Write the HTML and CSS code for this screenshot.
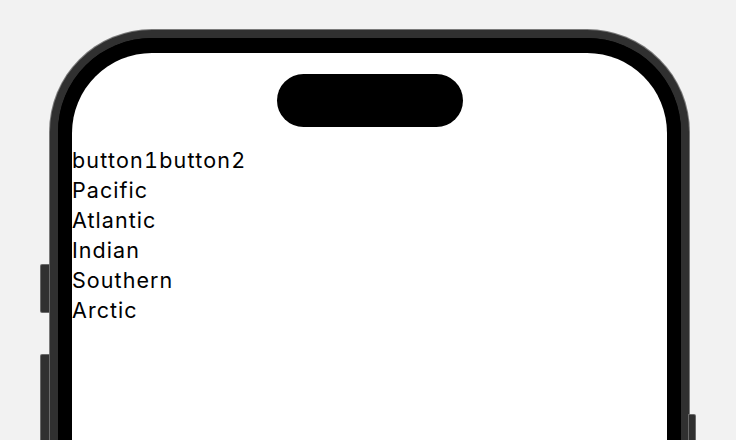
FILE: index.html
```html
<!DOCTYPE html>
<html>
<head>
<meta charset="utf-8">
<link rel="stylesheet" href="styles.css">
</head>
<body>
<div class="stage">
  <div class="device">
    <span class="side-btn side-btn-a"></span>
    <span class="side-btn side-btn-b"></span>
    <span class="side-btn side-btn-r"></span>
    <div class="bezel">
      <div class="screen">
        <div class="island"></div>
        <div class="content">
          <div class="btn-row"><button class="txt-btn">button1</button><button class="txt-btn">button2</button></div>
          <ul class="oceans">
            <li>Pacific</li>
            <li>Atlantic</li>
            <li>Indian</li>
            <li>Southern</li>
            <li>Arctic</li>
          </ul>
        </div>
      </div>
    </div>
  </div>
</div>
</body>
</html>
```
FILE: styles.css
```css
html, body {
  margin: 0;
  padding: 0;
  height: 100%;
  overflow: hidden;
  background: #f2f2f2;
}
.stage {
  padding: 30px 0 0 50px;
}
.device {
  position: relative;
  width: 639px;
  height: 410px;
  box-sizing: border-box;
  border: 8px solid #303030;
  border-bottom: none;
  border-radius: 102px 102px 0 0;
  box-shadow: 0 0 0 1px #7a7a7a;
  background: #000;
}
.side-btn {
  position: absolute;
  background: #303030;
  box-shadow: 0 0 0 1px #6a6a6a;
}
.side-btn-a {
  left: -17px;
  top: 227px;
  width: 8px;
  height: 47px;
  border-radius: 1px 0 0 1px;
}
.side-btn-b {
  left: -17px;
  top: 317px;
  width: 8px;
  height: 100px;
  border-radius: 1px 0 0 1px;
}
.side-btn-r {
  right: -14px;
  top: 377px;
  width: 6px;
  height: 40px;
  border-radius: 0 1px 1px 0;
}
.bezel {
  height: 100%;
  box-sizing: border-box;
  padding: 15px 14px 0 14px;
  border-radius: 94px 94px 0 0;
  background: #000;
}
.screen {
  height: 100%;
  background: #fff;
  border-radius: 80px 80px 0 0;
  display: flex;
  flex-direction: column;
  align-items: flex-start;
}
.island {
  align-self: center;
  margin-top: 21px;
  width: 186px;
  height: 53px;
  border-radius: 27px;
  background: #000;
}
.content {
  margin-top: 18px;
  font-family: Inter, "Liberation Sans", sans-serif;
  font-size: 21.5px;
  line-height: 30px;
  letter-spacing: 1.05px;
  color: #000;
}
.btn-row {
  display: flex;
}
.txt-btn {
  font: inherit;
  letter-spacing: 1.2px;
  font-feature-settings: "tnum" 1;
  color: inherit;
  background: none;
  border: none;
  padding: 0;
  margin: 0;
}
.oceans {
  list-style: none;
  margin: 0;
  padding: 0;
}
```
